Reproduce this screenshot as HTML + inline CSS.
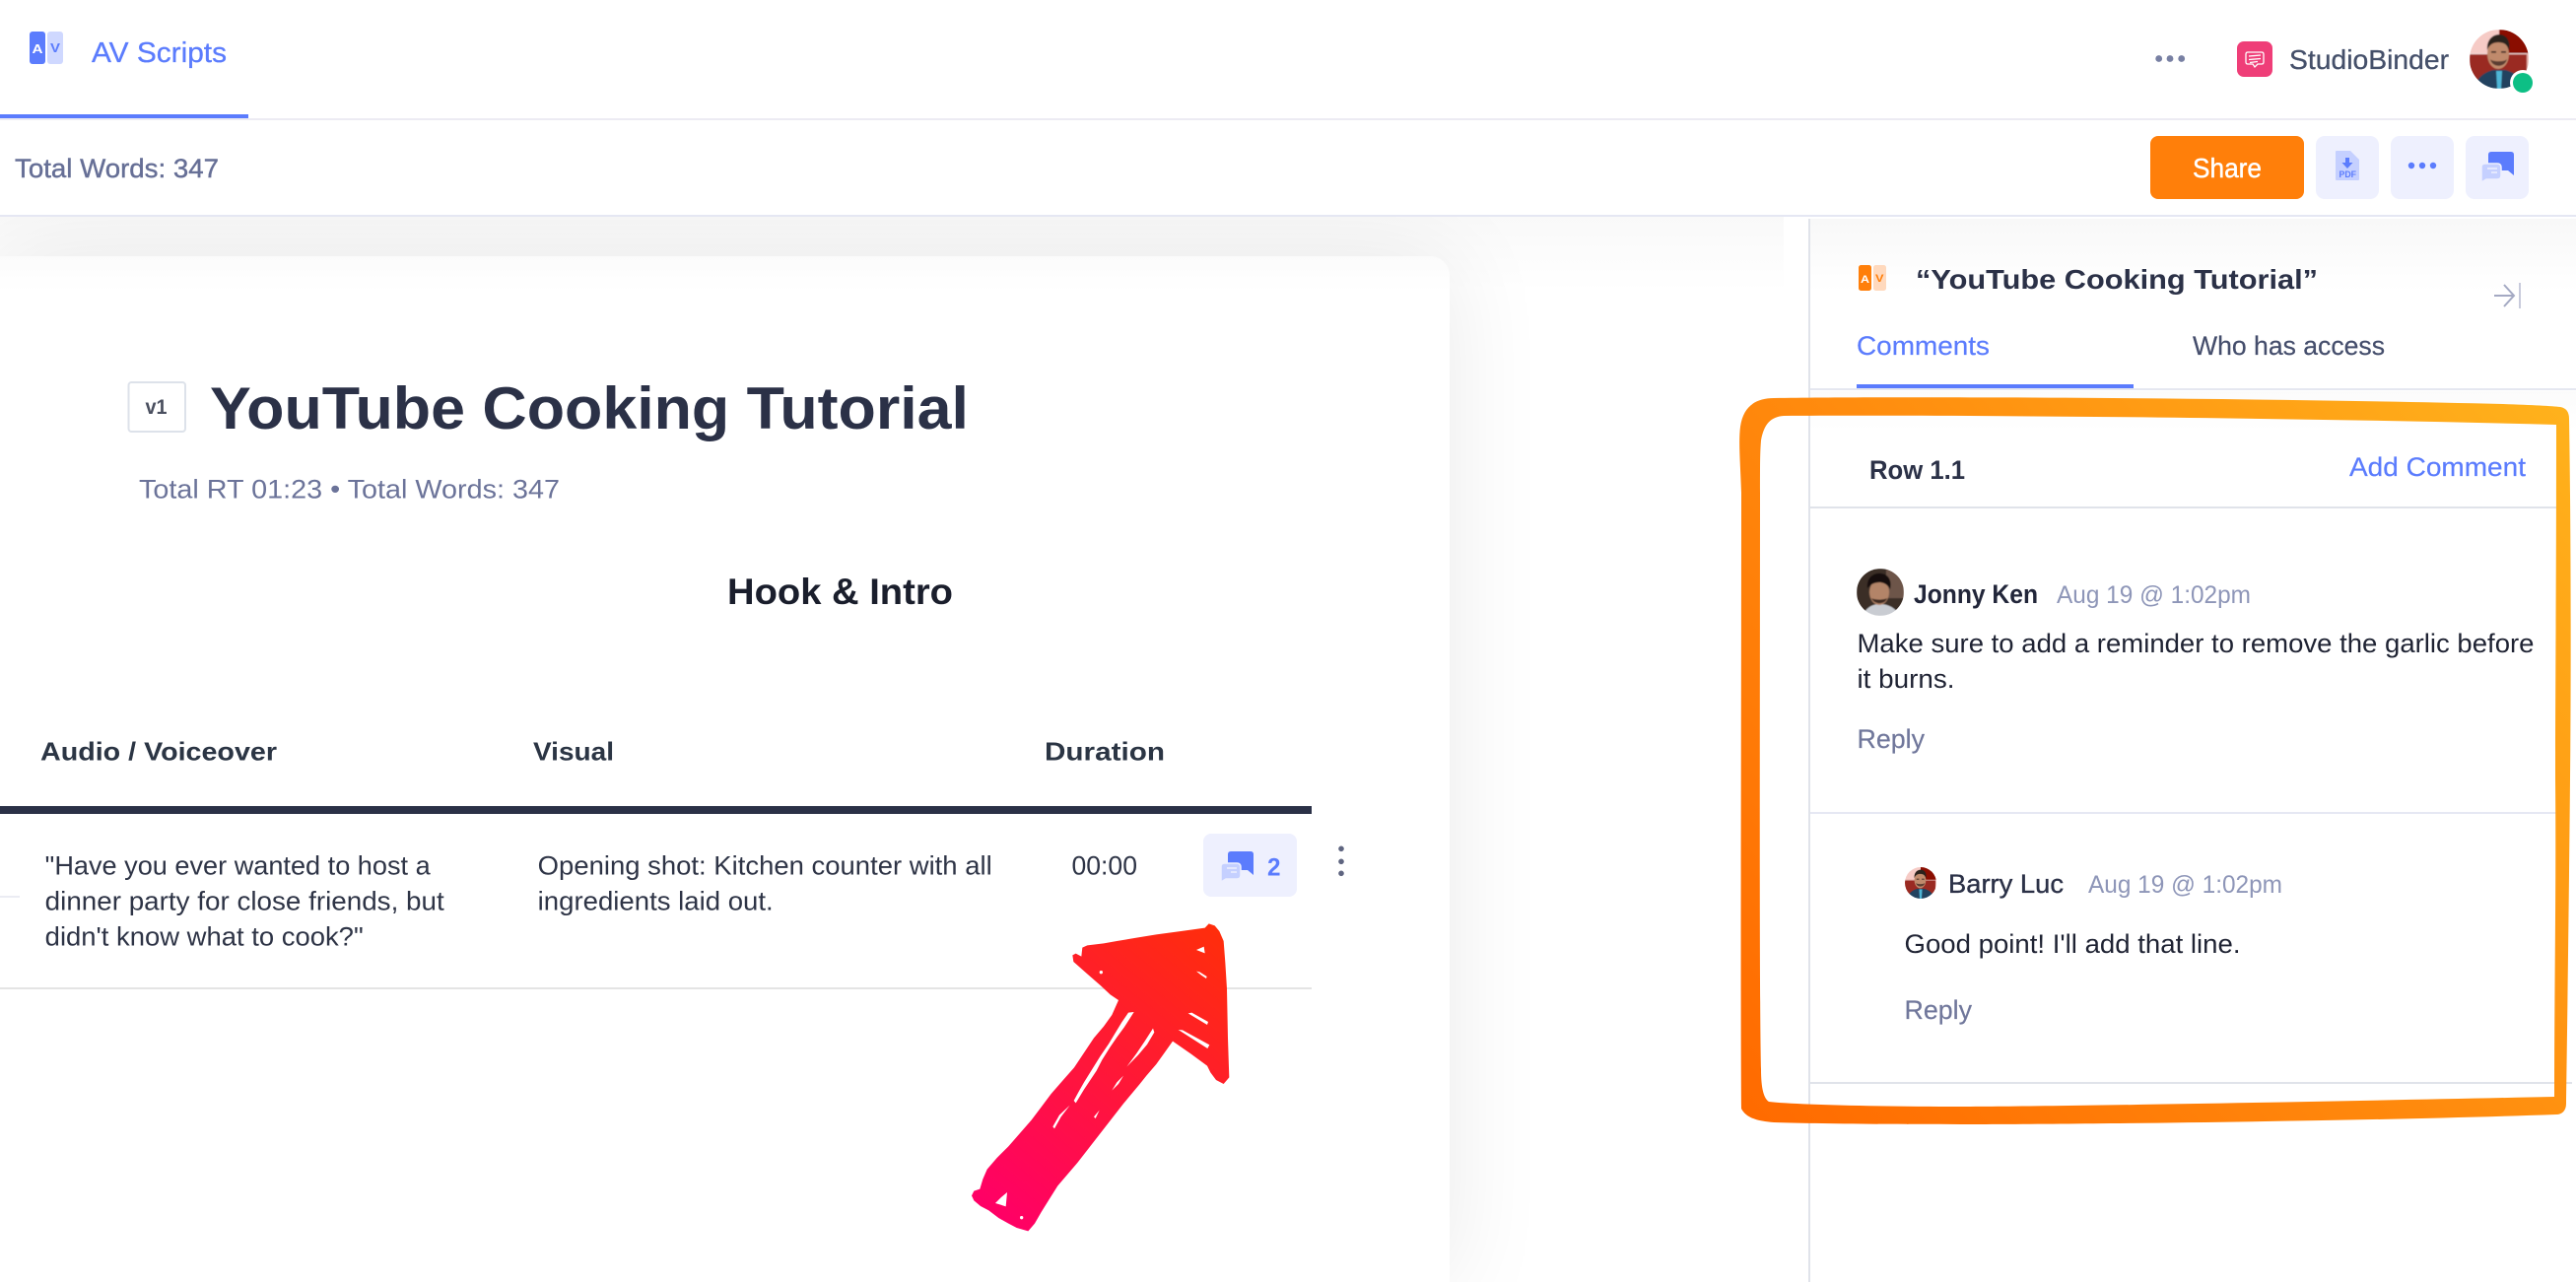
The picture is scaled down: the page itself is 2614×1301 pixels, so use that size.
<!DOCTYPE html>
<html><head><meta charset="utf-8"><title>AV Scripts</title>
<style>
html,body{margin:0;padding:0;background:#fff;width:2614px;height:1301px;overflow:hidden}
#clip{position:absolute;left:0;top:220px;width:1810px;height:1081px;overflow:hidden;background:linear-gradient(#f9f9f9,#fff 75px)}
#card{position:absolute;left:0;top:40px;width:1471px;height:1041px;border-radius:0 20px 0 0;background:linear-gradient(#fbfbfb,#fff 36px);box-shadow:0 0 100px rgba(0,0,0,.085)}
svg{position:absolute;left:0;top:0}
text{font-family:"Liberation Sans",sans-serif;white-space:pre}
</style></head><body>
<div id="clip"><div id="card"></div></div>
<svg width="2614" height="1301" viewBox="0 0 2614 1301" xmlns="http://www.w3.org/2000/svg">
<defs>
<linearGradient id="og" gradientUnits="userSpaceOnUse" x1="1770" y1="1140" x2="2610" y2="410"><stop offset="0" stop-color="#ff6a00"/><stop offset=".5" stop-color="#ff8c0e"/><stop offset="1" stop-color="#ffb21c"/></linearGradient>
<linearGradient id="rg" gradientUnits="userSpaceOnUse" x1="150" y1="940" x2="850" y2="70"><stop offset="0" stop-color="#ff0066"/><stop offset="1" stop-color="#ff2e0a"/></linearGradient>
<linearGradient id="pg" x1="0" y1="0" x2="0" y2="1"><stop offset="0" stop-color="#f8f8f8"/><stop offset="1" stop-color="#fff"/></linearGradient>
<clipPath id="ca"><circle cx="30" cy="30" r="30"/></clipPath>
<clipPath id="cj"><circle cx="24" cy="24" r="24"/></clipPath>
<filter id="b1" x="-20%" y="-20%" width="140%" height="140%"><feGaussianBlur stdDeviation=".5"/></filter>
<g id="barry"><g clip-path="url(#ca)" filter="url(#b1)">
<rect width="60" height="60" fill="#9a2b24"/><rect width="30" height="24" fill="#f6cbc6"/><rect x="30" width="30" height="24" fill="#8a0c02"/>
<rect y="24" width="60" height="1.2" fill="#f3dcd8"/><rect x="58" y="24" width="2" height="36" fill="#e6b2ac"/>
<path d="M5 60C7 48 16 43 24 41L36 41C44 43 54 48 56 60Z" fill="#20425f"/>
<path d="M27 42h6l-1 18h-4z" fill="#4fb6d6"/>
<ellipse cx="29" cy="25" rx="11" ry="15" fill="#c08a6c"/>
<path d="M18 21C17 10 24 5 30 5C37 5 42 11 40 21C38 15 35 13 29 13C24 13 20 15 18 21Z" fill="#2a211d"/>
<path d="M21 30C23 39 36 39 38 30C36 33 23 33 21 30Z" fill="#5a3e30"/>
<rect x="22" y="22" width="5" height="1.6" fill="#33231c"/><rect x="32" y="22" width="5" height="1.6" fill="#33231c"/>
</g></g>
</defs>

<!-- header -->
<rect x="0" y="120" width="2614" height="2" fill="#ecebf3"/>
<rect x="0" y="116" width="252" height="4" fill="#5b7cfd"/>
<rect x="0" y="218" width="2614" height="2" fill="#e5e7f3"/>
<rect x="30" y="32" width="16" height="33" rx="3" fill="#5b7cfd"/>
<rect x="48" y="32" width="16" height="33" rx="3" fill="#cfd8ff"/>
<text x="32.5" y="54" font-size="13" font-weight="700" fill="#fff" textLength="11" lengthAdjust="spacingAndGlyphs">A</text>
<text x="51" y="53" font-size="13" font-weight="700" fill="#5b7cfd" textLength="10" lengthAdjust="spacingAndGlyphs">V</text>
<text x="93" y="63" font-size="29" fill="#5b7cfd" stroke="#5b7cfd" stroke-width=".3" textLength="137" lengthAdjust="spacingAndGlyphs">AV Scripts</text>
<text x="15" y="180" font-size="27" fill="#666f96" stroke="#666f96" stroke-width=".4" textLength="207" lengthAdjust="spacingAndGlyphs">Total Words: 347</text>

<circle cx="2190.7" cy="59.5" r="3.4" fill="#7880a3"/><circle cx="2202" cy="59.5" r="3.4" fill="#7880a3"/><circle cx="2213.7" cy="59.5" r="3.4" fill="#7880a3"/>
<rect x="2270" y="42" width="36" height="36" rx="7" fill="#ef3e78"/>
<path d="M2281 53h14q2 0 2 2v8q0 2-2 2h-4l-3 3-2-3h-5q-2 0-2-2v-8q0-2 2-2zM2282 57l12-1M2282 60.500l12-1M2283 63.500l8-1" fill="none" stroke="#fff" stroke-width="1.300"/>
<text x="2323" y="70" font-size="27.500" fill="#45506a" stroke="#45506a" stroke-width=".3" textLength="162" lengthAdjust="spacingAndGlyphs">StudioBinder</text>
<use href="#barry" x="2506" y="30"/>
<circle cx="2560" cy="84" r="13" fill="#fff"/><circle cx="2560" cy="84" r="10" fill="#0dbf85"/>

<rect x="2182" y="138" width="156" height="64" rx="8" fill="#ff7f0a"/>
<text x="2225" y="180" font-size="28" fill="#fff" stroke="#fff" stroke-width=".4" textLength="70" lengthAdjust="spacingAndGlyphs">Share</text>
<rect x="2350" y="138" width="64" height="64" rx="9" fill="#eef0fe"/>
<rect x="2426" y="138" width="64" height="64" rx="9" fill="#eef0fe"/>
<rect x="2502" y="138" width="64" height="64" rx="9" fill="#eef0fe"/>
<path d="M2371 153h14l9 9v20q0 1-1 1h-22q-1 0-1-1v-28q0-1 1-1z" fill="#c5d0ff"/>
<path d="M2380 160h4v5h3.500l-5.500 6-5.500-6h3.500z" fill="#5b7cfd"/>
<text x="2373.500" y="180" font-size="9.500" font-weight="700" fill="#5b7cfd" textLength="17.500" lengthAdjust="spacingAndGlyphs">PDF</text>
<circle cx="2447" cy="168" r="3.200" fill="#5b7cfd"/><circle cx="2458" cy="168" r="3.200" fill="#5b7cfd"/><circle cx="2469" cy="168" r="3.200" fill="#5b7cfd"/>
<path d="M2528 154h20q3 0 3 3v21l-6-5h-17q-3 0-3-3v-13q0-3 3-3z" fill="#5b7cfd"/>
<path d="M2522 166h12q4 0 4 4v8q0 4-4 4h-11l-5 3v-16q0-3 4-3z" fill="#c5d0ff" stroke="#eef0fe" stroke-width="1.500"/>
<path d="M2524 171h10M2528 175h6" stroke="#eef0fe" stroke-width="1.400"/>

<!-- document -->
<rect x="130.500" y="388" width="57.500" height="50" rx="3" fill="#fff" stroke="#dde2ea" stroke-width="2"/>
<text x="147.500" y="420" font-size="21" font-weight="700" fill="#4a4f5f" textLength="22" lengthAdjust="spacingAndGlyphs">v1</text>
<text x="213" y="435" font-size="60" font-weight="700" fill="#2b3147" textLength="770" lengthAdjust="spacingAndGlyphs">YouTube Cooking Tutorial</text>
<text x="141" y="505.500" font-size="27" fill="#6b7399" textLength="427" lengthAdjust="spacingAndGlyphs">Total RT 01:23 • Total Words: 347</text>
<text x="738" y="613" font-size="37" font-weight="700" fill="#1a1e2c" textLength="229" lengthAdjust="spacingAndGlyphs">Hook &amp; Intro</text>
<text x="41" y="771.500" font-size="26" font-weight="700" fill="#2b3544" textLength="240" lengthAdjust="spacingAndGlyphs">Audio / Voiceover</text>
<text x="541" y="771.500" font-size="26" font-weight="700" fill="#2b3544" textLength="82" lengthAdjust="spacingAndGlyphs">Visual</text>
<text x="1060" y="771.500" font-size="26" font-weight="700" fill="#2b3544" textLength="122" lengthAdjust="spacingAndGlyphs">Duration</text>
<rect x="0" y="818" width="1331" height="8" fill="#2b3147"/>
<g font-size="26.500" fill="#2e3446">
<text x="45.700" y="887.700" textLength="391" lengthAdjust="spacingAndGlyphs">"Have you ever wanted to host a</text>
<text x="45.700" y="923.700" textLength="405" lengthAdjust="spacingAndGlyphs">dinner party for close friends, but</text>
<text x="45.700" y="959.700" textLength="323" lengthAdjust="spacingAndGlyphs">didn't know what to cook?"</text>
<text x="545.700" y="887.700" textLength="461" lengthAdjust="spacingAndGlyphs">Opening shot: Kitchen counter with all</text>
<text x="545.700" y="923.700" textLength="239" lengthAdjust="spacingAndGlyphs">ingredients laid out.</text>
<text x="1087.500" y="887.700" textLength="66.500" lengthAdjust="spacingAndGlyphs">00:00</text>
</g>
<rect x="0" y="909" width="20" height="2" fill="#ebecf3"/>
<rect x="0" y="1002" width="1331" height="2" fill="#e4e4e4"/>
<rect x="1221" y="846" width="95" height="64" rx="8" fill="#eef0fe"/>
<path d="M1249 864h20q3 0 3 3v21l-6-5h-17q-3 0-3-3v-13q0-3 3-3z" fill="#5b7cfd"/>
<path d="M1243 876h12q4 0 4 4v8q0 4-4 4h-11l-5 3v-16q0-3 4-3z" fill="#c5d0ff" stroke="#eef0fe" stroke-width="1.500"/>
<path d="M1245 881h10M1249 885h6" stroke="#eef0fe" stroke-width="1.400"/>
<text x="1286" y="888.300" font-size="25" font-weight="700" fill="#5b7cfd" textLength="13.500" lengthAdjust="spacingAndGlyphs">2</text>
<circle cx="1361" cy="861.300" r="2.800" fill="#5f6580"/><circle cx="1361" cy="874.300" r="2.800" fill="#5f6580"/><circle cx="1361" cy="886.300" r="2.800" fill="#5f6580"/>

<!-- red arrow -->
<g transform="translate(960 920) scale(.33333)">
<path fill="url(#rg)" fill-rule="evenodd" d="M800 52L818 58L832 75L845 105L850 170L855 250L858 400L862 520L845 540L822 528L805 505L795 485L745 448L690 410L665 445L640 480L610 515L590 540L540 600L505 645L470 690L435 735L400 780L340 850L315 890L290 930L270 965L250 988L215 978L190 965L160 948L130 925L105 912L85 895L78 880L85 866L103 860L112 830L125 800L155 765L190 730L225 690L260 650L290 610L320 570L355 530L390 490L420 445L450 400L480 365L505 330L525 285L500 268L470 240L430 205L388 168L385 148L395 143L412 152L415 125L430 118L480 112L520 105L580 95L640 85L715 75L788 65Z
M762 132L785 122L788 142Z
M762 197L772 199L794 213L792 219L777 209Z
M737 325L748 323L798 351L795 360Z
M707 375L720 376L802 421L796 432Z
M555 323L572 321L560 340L542 368L520 398L498 430L475 467L458 500L440 527L420 557L403 585L395 598L389 591L403 565L420 535L445 495L470 455L495 418L515 385L535 352Z
M630 371L634 383L612 420L585 452L550 488L580 447L605 410Z
M540 515L525 540L505 560L520 535Z
M377 605L350 640L330 676L325 670L345 635Z
M467 620L455 645L450 640Z
M186 870L182 913L150 903L168 885Z
M467 200a5 5 0 1 0 10 0a5 5 0 1 0-10 0Z
M225 947a5 5 0 1 0 10 0a5 5 0 1 0-10 0Z"/>
</g>

<!-- panel -->
<rect x="1836" y="222" width="778" height="74" fill="url(#pg)"/>
<rect x="1836" y="397" width="778" height="40" fill="url(#pg)" opacity=".55"/>
<rect x="1835" y="222" width="2" height="1079" fill="#e0e3ea"/>
<rect x="1886" y="269" width="13" height="26" rx="2.500" fill="#ff7f0a"/>
<rect x="1901" y="269" width="13" height="26" rx="2.500" fill="#ffd9bd"/>
<text x="1888" y="287" font-size="11" font-weight="700" fill="#fff" textLength="9" lengthAdjust="spacingAndGlyphs">A</text>
<text x="1903" y="286" font-size="11" font-weight="700" fill="#ff7f0a" textLength="8.500" lengthAdjust="spacingAndGlyphs">V</text>
<text x="1944" y="293" font-size="28" font-weight="700" fill="#2b3147" textLength="408" lengthAdjust="spacingAndGlyphs">“YouTube Cooking Tutorial”</text>
<path d="M2531 300h20M2541 289l10 11-10 11" fill="none" stroke="#a4a9c3" stroke-width="2"/>
<rect x="2556" y="287" width="2" height="26" fill="#c8cbdc"/>
<text x="1884" y="360" font-size="26.500" fill="#5b7cfd" stroke="#5b7cfd" stroke-width=".2" textLength="135" lengthAdjust="spacingAndGlyphs">Comments</text>
<text x="2225" y="360" font-size="26.500" fill="#454e6c" stroke="#454e6c" stroke-width=".2" textLength="195" lengthAdjust="spacingAndGlyphs">Who has access</text>
<rect x="1837" y="394" width="777" height="2" fill="#e5e7f0"/>
<rect x="1884" y="390" width="281" height="4" fill="#5b7cfd"/>
<text x="1897" y="486" font-size="26.500" font-weight="700" fill="#2b3147" textLength="97" lengthAdjust="spacingAndGlyphs">Row 1.1</text>
<text x="2384" y="483" font-size="26.500" fill="#5b7cfd" stroke="#5b7cfd" stroke-width=".2" textLength="179" lengthAdjust="spacingAndGlyphs">Add Comment</text>
<rect x="1837" y="514" width="760" height="2" fill="#e0e3ea"/>

<g transform="translate(1884 577)"><g clip-path="url(#cj)" filter="url(#b1)">
<rect width="48" height="48" fill="#3a2d26"/><rect x="30" width="18" height="30" fill="#6d5548"/>
<path d="M6 48C10 38 18 36 24 36C32 36 40 40 44 48Z" fill="#c9ccd2"/>
<ellipse cx="23" cy="24" rx="10" ry="13" fill="#b38468"/>
<path d="M11 20C10 8 18 4 25 5C33 6 36 13 34 21C31 15 26 14 23 14C18 14 14 16 11 20Z" fill="#120d0b"/>
<path d="M15 30C18 37 29 37 31 30C28 32 18 32 15 30Z" fill="#3d2a22"/>
</g></g>
<text x="1942" y="612" font-size="26.500" font-weight="700" fill="#22263a" textLength="126" lengthAdjust="spacingAndGlyphs">Jonny Ken</text>
<text x="2087" y="612" font-size="25" fill="#8e96b8" textLength="197" lengthAdjust="spacingAndGlyphs">Aug 19 @ 1:02pm</text>
<text x="1884.500" y="662" font-size="26.500" fill="#1f2333" textLength="687" lengthAdjust="spacingAndGlyphs">Make sure to add a reminder to remove the garlic before</text>
<text x="1884.500" y="698" font-size="26.500" fill="#1f2333" textLength="99" lengthAdjust="spacingAndGlyphs">it burns.</text>
<text x="1884.500" y="759" font-size="26.500" fill="#70779b" stroke="#70779b" stroke-width=".2" textLength="68.500" lengthAdjust="spacingAndGlyphs">Reply</text>
<rect x="1837" y="824" width="760" height="2" fill="#e6e8f3"/>

<use href="#barry" transform="translate(1933 880) scale(.5333)"/>
<text x="1977" y="906" font-size="26.500" fill="#2b3147" stroke="#2b3147" stroke-width=".35" textLength="117" lengthAdjust="spacingAndGlyphs">Barry Luc</text>
<text x="2119" y="906" font-size="25" fill="#8e96b8" textLength="197" lengthAdjust="spacingAndGlyphs">Aug 19 @ 1:02pm</text>
<text x="1932.500" y="967" font-size="26.500" fill="#1f2333" textLength="341" lengthAdjust="spacingAndGlyphs">Good point! I'll add that line.</text>
<text x="1932.500" y="1034" font-size="26.500" fill="#70779b" stroke="#70779b" stroke-width=".2" textLength="68.500" lengthAdjust="spacingAndGlyphs">Reply</text>
<rect x="1837" y="1098" width="773" height="2" fill="#e0e3ea"/>

<!-- orange hand-drawn box -->
<path fill="url(#og)" fill-rule="evenodd" d="M1767 500C1766 470 1764 448 1766 433C1769 412 1782 404 1800 404C1950 402 2300 404 2540 410C2570 411 2590 412 2598 413C2604 414 2607 418 2607 425C2609 540 2609 700 2608 790C2607 900 2605 1050 2604 1120C2604 1127 2600 1131 2594 1131C2400 1138 2100 1141 1990 1141C1900 1141 1830 1140 1800 1139C1785 1138 1772 1135 1767 1125C1766 1000 1767 700 1767 500Z
M1786 500C1786 470 1786 460 1787 447C1790 430 1797 423 1810 422C1950 421 2300 423 2594 431C2594 600 2593 700 2593 790C2594 900 2592 1000 2592 1113C2400 1117 2100 1123 1990 1123C1900 1123 1820 1121 1795 1118C1790 1115 1787 1105 1787 1085C1785 1000 1786 700 1786 500Z"/>
</svg>
</body></html>
